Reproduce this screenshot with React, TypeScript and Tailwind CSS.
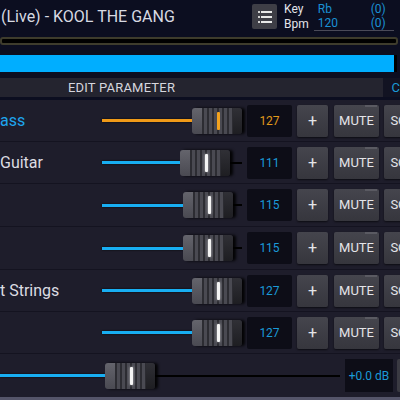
import React from "react";

const Knob = ({ orange }: { orange?: boolean }) => (
  <div className="relative flex h-[26px] w-[50px] shrink-0 overflow-hidden rounded-[3px] shadow-[3px_0_3px_rgba(0,0,0,0.9)]">
    <div className="w-[10px] bg-gradient-to-b from-[#64646c] to-[#4a4a52]" />
    <div className="flex-1 bg-[repeating-linear-gradient(90deg,#2c2c32_0px,#2c2c32_2px,#4a4a52_2px,#4a4a52_5px)]" />
    <div className="w-[9px] bg-gradient-to-b from-[#303036] to-[#1e1e22]" />
    <div
      className={
        "absolute left-[25px] top-[4px] h-[18px] w-[3px] rounded-[1px] " +
        (orange ? "bg-[#f2a21e]" : "bg-[#f4f4f4] shadow-[0_0_3px_rgba(255,255,255,0.6)]")
      }
    />
  </div>
);

const Fader = ({ pos, orange }: { pos: number; orange?: boolean }) => (
  <div className="flex w-[140px] shrink-0 items-center">
    <div
      className={
        "h-[3px] shadow-[0_0_2px_rgba(0,0,0,0.9)] " + (orange ? "bg-[#f09a18]" : "bg-[#18aef2]")
      }
      style={{ width: pos }}
    />
    <Knob orange={orange} />
    <div className="h-[2px] flex-1 bg-black" />
  </div>
);

const Btn = ({ children, w }: { children: React.ReactNode; w: string }) => (
  <div
    className={
      "relative flex h-[32px] shrink-0 items-center justify-center overflow-hidden rounded-[2px] bg-gradient-to-b from-[#45454d] to-[#36363d] text-[13px] text-[#e4e4e8] shadow-[0_1px_2px_rgba(0,0,0,0.6)] " +
      w
    }
  >
    {children}
  </div>
);

type Row = { name: string; val: number; pos: number; orange?: boolean; h: string };

const rows: Row[] = [
  { name: "ass", val: 127, pos: 90, orange: true, h: "h-[42px]" },
  { name: "Guitar", val: 111, pos: 78, h: "h-[42px]" },
  { name: "", val: 115, pos: 81, h: "h-[43px]" },
  { name: "", val: 115, pos: 81, h: "h-[43px]" },
  { name: "t Strings", val: 127, pos: 90, h: "h-[42px]" },
  { name: "", val: 127, pos: 90, h: "h-[42px]" },
];

export default function App() {
  return (
    <div
      className="relative h-[400px] w-[400px] overflow-hidden bg-[#0c0e20]"
      style={{ fontFamily: "Roboto, 'Noto Sans', sans-serif" }}
    >
      {/* header */}
      <div className="flex h-[33px] items-center">
        <div className="w-[252px] shrink-0 whitespace-nowrap pl-[1px] text-[16px] leading-none text-[#d8dae2]">
          (Live) - KOOL THE GANG
        </div>
        <div className="flex h-[25px] w-[25px] shrink-0 flex-col items-center justify-center gap-[3px] rounded-[2px] bg-[#3e3e46]">
          {[0, 1, 2].map((i) => (
            <div key={i} className="flex items-center gap-[1px]">
              <div className="h-[2px] w-[2px] bg-[#d0d0d0]" />
              <div className="h-[2px] w-[11px] bg-[#e8e8e8]" />
            </div>
          ))}
        </div>
        <div className="ml-[7px] flex flex-col text-[12px] leading-[15px] text-[#e4e4ea]">
          <span>Key</span>
          <span>Bpm</span>
        </div>
        <div className="ml-[5px] flex w-[80px] flex-col border-b border-[#4a4a58] pl-[4px] text-[12px] leading-[14px] text-[#1a90d4]">
          <div className="flex justify-between pr-[8px]">
            <span>Rb</span>
            <span>(0)</span>
          </div>
          <div className="flex justify-between pr-[8px]">
            <span>120</span>
            <span>(0)</span>
          </div>
        </div>
      </div>
      {/* progress track */}
      <div className="mt-[4px] h-[8px] w-[398px] rounded-[3px] border-2 border-[#3e3c2c] bg-black" />
      {/* blue bar */}
      <div className="mt-[10px] flex h-[17px]">
        <div className="w-[394px] bg-[#00aeff]" />
        <div className="w-[3px] bg-black" />
      </div>
      {/* edit parameter */}
      <div className="mt-[6px] flex h-[19px] items-center">
        <div className="flex h-full w-[383px] items-center bg-[#24242f] pl-[68px] text-[13px] tracking-[0.2px] text-[#d6d6de]">
          EDIT PARAMETER
        </div>
        <div className="flex h-full flex-1 items-center bg-[#121322] pl-[9px] text-[13px] text-[#1a9ad8]">
          C
        </div>
      </div>
      {/* rows */}
      <div className="mt-[3px] flex flex-col bg-[#1e1d2b]">
        {rows.map((r, i) => (
          <div
            key={i}
            className={"flex items-center border-b border-[#141320] " + r.h}
          >
            <div
              className={
                "w-[102px] shrink-0 whitespace-nowrap text-[16px] " +
                (r.orange ? "text-[#1ea6ee]" : "text-[#dcdce2]")
              }
            >
              {r.name}
            </div>
            <Fader pos={r.pos} orange={r.orange} />
            <div
              className={
                "ml-[5px] flex h-[32px] w-[45px] shrink-0 items-center justify-center rounded-[2px] bg-[#0d0d17] text-[12px] " +
                (r.orange ? "text-[#e09a1c]" : "text-[#1a9ad8]")
              }
            >
              {r.val}
            </div>
            <div className="ml-[5px]">
              <Btn w="w-[31px]">
                <span className="text-[16px]">+</span>
              </Btn>
            </div>
            <div className="ml-[6px]">
              <Btn w="w-[45px]">
                MUTE
                <div className="absolute right-[2px] top-0 h-[2px] w-[12px] bg-[#5a5a62]" />
              </Btn>
            </div>
            <div className="ml-[5px]">
              <Btn w="w-[45px]">SOLO</Btn>
            </div>
          </div>
        ))}
        {/* master */}
        <div className="flex h-[43px] items-center">
          <div className="flex w-[340px] shrink-0 items-center">
            <div className="h-[3px] w-[105px] bg-[#18aef2] shadow-[0_0_2px_rgba(0,0,0,0.9)]" />
            <Knob />
            <div className="h-[2px] flex-1 bg-black" />
          </div>
          <div className="ml-[5px] flex h-[33px] w-[48px] shrink-0 items-center justify-center bg-[#0d0d17] text-[12px] text-[#1a9ad8]">
            +0.0 dB
          </div>
          <div className="ml-[4px] h-[33px] w-[20px] shrink-0 rounded-[2px] bg-[#3a3a42]" />
        </div>
        <div className="h-[3px] bg-[#55556a]" />
      </div>
    </div>
  );
}
